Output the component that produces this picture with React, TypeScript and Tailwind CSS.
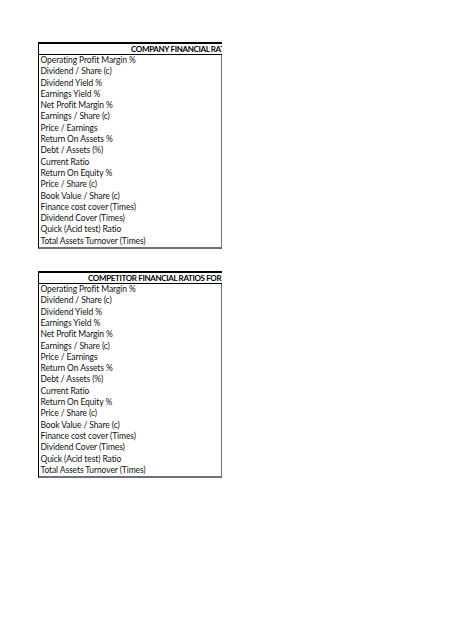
import React from 'react';

const ROWS = [
  'Operating Profit Margin %',
  'Dividend / Share (c)',
  'Dividend Yield %',
  'Earnings Yield %',
  'Net Profit Margin %',
  'Earnings / Share (c)',
  'Price / Earnings',
  'Return On Assets %',
  'Debt / Assets (%)',
  'Current Ratio',
  'Return On Equity %',
  'Price / Share (c)',
  'Book Value / Share (c)',
  'Finance cost cover (Times)',
  'Dividend Cover (Times)',
  'Quick (Acid test) Ratio',
  'Total Assets Turnover (Times)',
];

const RatioTable: React.FC<{ title: string; indent: string }> = ({ title, indent }) => (
  <div className="w-[184px]">
    <div className="h-[13px] border-t-2 border-l border-b border-black overflow-hidden whitespace-nowrap">
      <div className={`${indent} text-[8px] leading-[10px] font-bold tracking-[-0.35px] text-black`}>{title}</div>
    </div>
    <div className="border-l border-black border-r border-r-gray-500 border-b-2 border-b-gray-500">
      {ROWS.map(r => (
        <div key={r} className="h-[11.3px] pl-[1.5px] text-[8.5px] leading-[11.3px] tracking-[-0.1px] text-[#111] whitespace-nowrap">{r}</div>
      ))}
    </div>
  </div>
);

export default function App() {
  return (
    <div className="w-[474px] h-[632px] bg-white pt-[42px] pl-[38px]" style={{ fontFamily: 'Lato, "Liberation Sans", sans-serif' }}>
      <RatioTable title="COMPANY FINANCIAL RATIOS FOR 2020" indent="pl-[92px]" />
      <div className="h-[22px]" />
      <RatioTable title="COMPETITOR FINANCIAL RATIOS FOR 2020" indent="pl-[49px]" />
    </div>
  );
}
